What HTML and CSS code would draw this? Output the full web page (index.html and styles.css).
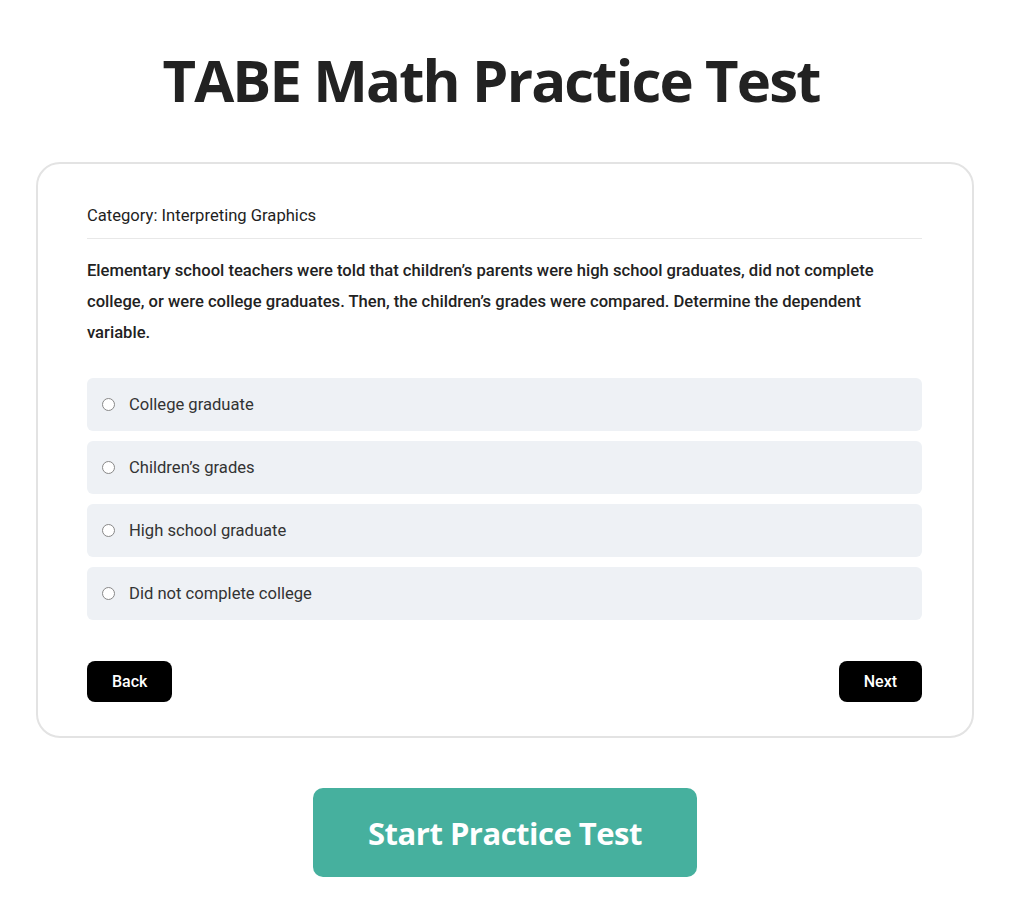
FILE: index.html
```html
<!DOCTYPE html>
<html lang="en">
<head>
  <meta charset="UTF-8">
  <title>TABE Math Practice Test</title>
  <link rel="stylesheet" href="styles.css">
</head>
<body>
  <h1 class="title">TABE Math Practice Test</h1>
  <div class="quiz">
    <div class="category">Category: Interpreting Graphics</div>
    <p class="question">Elementary school teachers were told that children’s parents were high school graduates, did not complete college, or were college graduates. Then, the children’s grades were compared. Determine the dependent variable.</p>
    <div class="options">
      <label class="option"><span class="radio"></span>College graduate</label>
      <label class="option"><span class="radio"></span>Children’s grades</label>
      <label class="option"><span class="radio"></span>High school graduate</label>
      <label class="option"><span class="radio"></span>Did not complete college</label>
    </div>
    <div class="nav">
      <button class="nav-btn">Back</button>
      <button class="nav-btn">Next</button>
    </div>
  </div>
  <div class="start-wrap">
    <button class="start">Start Practice Test</button>
  </div>
</body>
</html>
```
FILE: styles.css
```css
body {
  margin: 0;
  padding: 0 50px 0 36px;
  background: #ffffff;
  font-family: Roboto, "Liberation Sans", sans-serif;
  color: #222;
}
.title {
  font-family: "Open Sans", "Liberation Sans", sans-serif;
  font-weight: 700;
  font-size: 58px;
  letter-spacing: -1.85px;
  line-height: 80px;
  color: #222;
  text-align: center;
  margin: 40px 0 42px;
  padding-right: 28px;
}
.quiz {
  border: 2px solid #e3e3e3;
  border-radius: 24px;
  padding: 40px 50px 34px 49px;
}
.category {
  font-size: 16.6px;
  line-height: 24px;
  color: #1e1e1e;
  padding-bottom: 10px;
  border-bottom: 1px solid #e8e8e8;
}
.question {
  margin: 16px 0 30px;
  font-size: 16.6px;
  font-weight: 500;
  line-height: 31px;
  color: #222;
}
.options {
  display: flex;
  flex-direction: column;
  gap: 10px;
}
.option {
  display: flex;
  align-items: center;
  height: 53px;
  padding: 0 15px;
  background: #eef1f5;
  border-radius: 6px;
  font-size: 16.6px;
  color: #333;
}
.radio {
  width: 11px;
  height: 11px;
  border: 1px solid #888;
  border-radius: 50%;
  background: #fff;
  margin-right: 14px;
}
.nav {
  display: flex;
  justify-content: space-between;
  margin-top: 41px;
}
.nav-btn {
  background: #000;
  color: #fff;
  border: none;
  border-radius: 8px;
  height: 41px;
  padding: 0 25px;
  font-family: Roboto, sans-serif;
  font-weight: 500;
  font-size: 16px;
}
.start-wrap {
  display: flex;
  justify-content: center;
  margin-top: 50px;
}
.start {
  width: 384px;
  height: 89px;
  background: #46b09e;
  color: #fff;
  border: none;
  border-radius: 10px;
  font-family: "Open Sans", sans-serif;
  font-weight: 700;
  font-size: 31px;
  letter-spacing: -0.5px;
}
```
